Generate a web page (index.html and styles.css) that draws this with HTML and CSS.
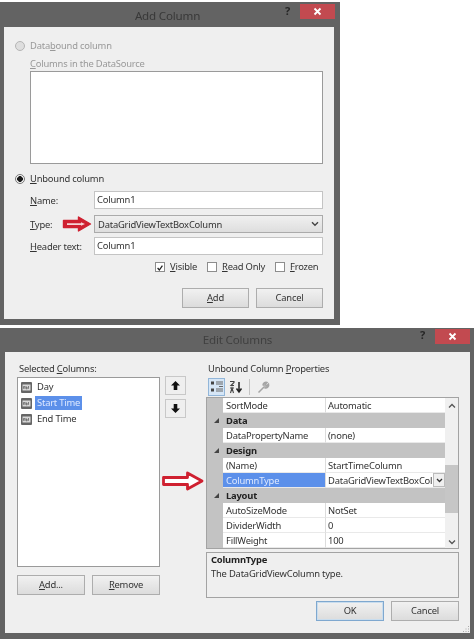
FILE: index.html
```html
<!DOCTYPE html>
<html lang="en">
<head>
<meta charset="utf-8">
<title>Add Column / Edit Columns</title>
<link rel="stylesheet" href="styles.css">
</head>
<body>
<svg class="defs" width="0" height="0" aria-hidden="true">
  <symbol id="abl" viewBox="0 0 11 11">
    <rect x="0" y="0" width="11" height="11" rx="1" fill="#666"/>
    <rect x="1.5" y="2.5" width="8" height="6" fill="#d8d8d8"/>
    <path d="M2.5 6.8V4.5h1.3v2.3M5 4.2v2.6h1.2V5.3H5M7.5 4v2.8" fill="none" stroke="#555" stroke-width=".7"/>
  </symbol>
</svg>

<section class="dialog add">
  <header class="titlebar">
    <span></span>
    <h1 class="title">Add Column</h1>
    <div class="wincontrols"><span class="help">?</span><span class="close"><svg width="9" height="9" viewBox="0 0 9 9"><path d="M1.5 1.500l6 6M7.500 1.500l-6 6" stroke="#fff" stroke-width="1.800"/></svg></span></div>
  </header>
  <div class="panel add-panel">
    <div class="radio-row disabled"><span class="radio"></span><span>Data<u>b</u>ound column</span></div>
    <div class="indent sub disabled"><u>C</u>olumns in the DataSource</div>
    <div class="listbox sources"></div>
    <div class="radio-row unbound"><span class="radio on"></span><span><u>U</u>nbound column</span></div>
    <div class="form">
      <label><u>N</u>ame:</label><div class="field">Column1</div>
      <label class="typelabel"><u>T</u>ype:<svg class="arrow-solid" width="30" height="16" viewBox="0 0 30 16"><path d="M1.500 4.500h15V1l12 7-12 7v-3.500H1.500z" fill="#cf2030" stroke="#cf2030" stroke-width="1.400" stroke-linejoin="round"/><path d="M5 7.300h14v-1l4 1.800-4 1.600v-.8H5z" fill="#f5d3d5"/></svg></label>
      <div class="field select"><span>DataGridViewTextBoxColumn</span><svg width="8" height="6" viewBox="0 0 8 6"><path d="M1 1.200l3 3 3-3" fill="none" stroke="#444" stroke-width="1.400"/></svg></div>
      <label><u>H</u>eader text:</label><div class="field">Column1</div>
    </div>
    <div class="checks">
      <span class="check c1"><span class="box"><svg width="10" height="10" viewBox="0 0 10 10"><path d="M2 5l2.200 2.500L8 2" fill="none" stroke="#222" stroke-width="1.600"/></svg></span><span><u>V</u>isible</span></span>
      <span class="check c2"><span class="box"></span><span><u>R</u>ead Only</span></span>
      <span class="check"><span class="box"></span><span><u>F</u>rozen</span></span>
    </div>
    <div class="actions add-actions">
      <button class="btn wide"><u>A</u>dd</button>
      <button class="btn wide">Cancel</button>
    </div>
  </div>
</section>

<section class="dialog edit">
  <header class="titlebar">
    <span></span>
    <h1 class="title">Edit Columns</h1>
    <div class="wincontrols"><span class="help">?</span><span class="close"><svg width="9" height="9" viewBox="0 0 9 9"><path d="M1.500 1.500l6 6M7.500 1.500l-6 6" stroke="#fff" stroke-width="1.800"/></svg></span></div>
  </header>
  <div class="panel edit-panel">
    <div class="col-left">
      <div class="collabel">Selected <u>C</u>olumns:</div>
      <ul class="listbox columns">
        <li><svg class="ico"><use href="#abl"/></svg><span>Day</span></li>
        <li><svg class="ico"><use href="#abl"/></svg><span class="sel">Start Time</span></li>
        <li><svg class="ico"><use href="#abl"/></svg><span>End Time</span></li>
      </ul>
      <div class="actions left-actions">
        <button class="btn wide"><u>A</u>dd...</button>
        <button class="btn wide"><u>R</u>emove</button>
      </div>
    </div>
    <div class="col-mid">
      <button class="btn move"><svg width="9" height="9" viewBox="0 0 9 9"><path d="M4.500 0L9 4.600H6.300V9H2.700V4.600H0z" fill="#111"/></svg></button>
      <button class="btn move"><svg width="9" height="9" viewBox="0 0 9 9"><path d="M4.500 9L9 4.400H6.300V0H2.700v4.400H0z" fill="#111"/></svg></button>
    </div>
    <div class="col-right">
      <div class="collabel">Unbound Column <u>P</u>roperties</div>
      <div class="toolbar">
        <span class="tool active"><svg width="14" height="14" viewBox="0 0 14 14"><path d="M1 1.500h3v3H1zM1 8.500h3v3H1z" fill="#444"/><path d="M6 2h7M6 4h7M6 9h7M6 11h7M9 6.500h4" stroke="#666" stroke-width="1.200"/></svg></span>
        <span class="tool"><svg width="14" height="14" viewBox="0 0 14 14"><path d="M1 1.500h4v1l-3 3h3M1 8h4M1.500 13l1.500-5 1.500 5" fill="none" stroke="#444" stroke-width="1.100"/><path d="M10 2v9M7.500 8.500L10 12l2.500-3.500" fill="none" stroke="#222" stroke-width="1.500"/></svg></span>
        <span class="tsep"></span>
        <span class="tool"><svg width="13" height="13" viewBox="0 0 13 13"><path d="M1.500 11.500L7 6M6 4.500a3 3 0 0 1 4-3L8.300 3.300l1.400 1.400 1.800-1.700a3 3 0 0 1-4 3.700" fill="#b5b5b5" stroke="#a5a5a5" stroke-width="1.500"/></svg></span>
      </div>
      <div class="propgrid">
        <div class="rows">
          <div class="row"><span class="gut"></span><span class="name">SortMode</span><span class="val">Automatic</span></div>
          <div class="row cat"><span class="gut"><i class="tri"></i></span><span class="name">Data</span></div>
          <div class="row"><span class="gut"></span><span class="name">DataPropertyName</span><span class="val">(none)</span></div>
          <div class="row cat"><span class="gut"><i class="tri"></i></span><span class="name">Design</span></div>
          <div class="row"><span class="gut"></span><span class="name">(Name)</span><span class="val">StartTimeColumn</span></div>
          <div class="row picked"><span class="gut"></span><span class="name">ColumnType</span><span class="val"><span>DataGridViewTextBoxCol</span><span class="drop"><svg width="7" height="5" viewBox="0 0 7 5"><path d="M1 1l2.500 2.500L6 1" fill="none" stroke="#333" stroke-width="1.300"/></svg></span></span></div>
          <div class="row cat"><span class="gut"><i class="tri"></i></span><span class="name">Layout</span></div>
          <div class="row"><span class="gut"></span><span class="name">AutoSizeMode</span><span class="val">NotSet</span></div>
          <div class="row"><span class="gut"></span><span class="name">DividerWidth</span><span class="val">0</span></div>
          <div class="row"><span class="gut"></span><span class="name">FillWeight</span><span class="val">100</span></div>
        </div>
        <div class="scrollbar">
          <svg width="8" height="6" viewBox="0 0 8 6"><path d="M1 4.500l3-3 3 3" fill="none" stroke="#555" stroke-width="1.300"/></svg>
          <div class="thumb"></div>
          <svg width="8" height="6" viewBox="0 0 8 6"><path d="M1 1.500l3 3 3-3" fill="none" stroke="#555" stroke-width="1.300"/></svg>
        </div>
      </div>
      <div class="desc"><strong>ColumnType</strong><span>The DataGridViewColumn type.</span></div>
      <div class="actions right-actions">
        <button class="btn wide default">OK</button>
        <button class="btn wide">Cancel</button>
      </div>
    </div>
    <svg class="arrow-outline" width="42" height="20" viewBox="0 0 42 20"><path d="M1.500 6.500h24V2L40 10 25.500 18v-4.500h-24z" fill="#fff" stroke="#cf2030" stroke-width="2.800" stroke-linejoin="round"/></svg>
    <svg class="grip" width="8" height="8" viewBox="0 0 8 8"><path d="M6 1h1v1H6zM3.500 3.500h1v1h-1zM6 3.500h1v1H6zM1 6h1v1H1zM3.500 6h1v1h-1zM6 6h1v1H6z" fill="#aaa"/></svg>
  </div>
</section>
</body>
</html>
```
FILE: styles.css
```css
* { box-sizing: border-box; }
html, body { margin: 0; padding: 0; background: #fff; }
body {
  width: 474px;
  height: 642px;
  overflow: hidden;
  font: 9.4px/14px "Noto Sans", "Open Sans", sans-serif;
  letter-spacing: -0.2px;
  color: #333;
  filter: blur(0.45px);
}
.defs { position: absolute; }
u { text-decoration-thickness: 1px; text-underline-offset: 1px; }

.dialog { background: #636363; }
.add { width: 340px; height: 323px; margin-top: 2px; padding: 0 6px 6px 4px; }
.edit { width: 474px; height: 311px; margin-top: 3px; padding: 0 4px 6px 5px; }
.titlebar { display: grid; grid-template-columns: 1fr auto 1fr; align-items: start; }
.add .titlebar { height: 25px; padding-top: 2px; margin: 0 -1px 0 -4px; }
.edit .titlebar { height: 24px; margin: 0 0 0 -5px; }
.title { margin: 2px 0 0; font-size: 11.6px; line-height: 20px; font-weight: 400; color: #383838; }
.edit .title { color: #404040; margin: 2px 0 0 5px; }
.wincontrols { justify-self: end; display: flex; align-items: flex-start; gap: 10px; }
.help { font-size: 11px; line-height: 14px; font-weight: 700; color: #262626; }
.close { width: 35px; height: 15px; background: #c24a50; display: flex; align-items: center; justify-content: center; }
.edit .close { margin-top: 1px; }
.panel { background: #efefef; }
.add-panel { height: 292px; padding-top: 12px; }
.disabled { color: #999; }
.radio-row { display: flex; align-items: center; gap: 5px; height: 14px; padding-left: 11px; }
.radio { width: 10px; height: 10px; border-radius: 50%; border: 1px solid #8a8a8a; background: #e6e6e6; }
.disabled .radio { border-color: #b5b5b5; background: #dedede; }
.radio.on { background: radial-gradient(circle, #1c1c1c 0 2.600px, #f5f5f5 3.100px); border-color: #777; }
.indent { margin-left: 26px; }
.sub { margin-top: 4px; height: 14px; }
.listbox { background: #fff; border: 1px solid #9a9a9a; padding: 0; list-style: none; }
.sources { width: 293px; height: 93px; margin: 0 0 0 26px; }
.unbound { margin-top: 8px; }
.form { display: grid; grid-template-columns: 64px 229px; grid-template-rows: 24px 22px 18px; margin: 5px 0 0 26px; align-items: start; }
.form label { line-height: 20px; position: relative; }
.field { height: 18px; background: #fff; border: 1px solid #c4c4c4; padding: 0 2px; line-height: 15px; }
.select { background: linear-gradient(#f0f0f0, #dedede); border-color: #ababab; display: flex; align-items: center; justify-content: space-between; padding: 0 3px; }
.arrow-solid { position: absolute; left: 32px; top: 1px; }
.checks { display: flex; margin: 5px 0 0 151px; height: 14px; }
.check { display: flex; align-items: center; gap: 5px; }
.c1 { width: 52px; }
.c2 { width: 68px; }
.box { width: 10px; height: 10px; border: 1px solid #8d8d8d; background: #fff; display: flex; }
.actions { display: flex; }
.add-actions { margin: 14px 0 0 178px; gap: 7px; }
.btn { height: 20px; padding: 0; font: inherit; letter-spacing: inherit; color: #333; background: linear-gradient(#f1f1f1, #dcdcdc); border: 1px solid #adadad; display: flex; align-items: center; justify-content: center; }
.wide { width: 67px; }

.edit-panel { height: 281px; padding: 10px 0 0 12px; display: flex; position: relative; }
.col-left { width: 143px; }
.collabel { height: 14px; padding-left: 2px; }
.columns { height: 190px; margin: 1px 0 0; padding-top: 1px; }
.columns li { display: flex; align-items: center; gap: 3px; height: 16.200px; padding-left: 3px; }
.ico { width: 11px; height: 11px; flex: none; }
.columns li span { padding: 0 2px; line-height: 14px; }
.columns .sel { background: #5c90ea; color: #dde8ff; }
.left-actions { margin-top: 8px; gap: 7px; }
.left-actions .btn { width: 68px; }
.col-mid { width: 21px; margin: 14px 20px 0 5px; display: flex; flex-direction: column; gap: 4px; }
.move { width: 21px; height: 19px; background: #efefef; border-color: #c8c8c8; }
.col-right { width: 253px; }
.toolbar { display: flex; align-items: center; height: 18px; margin: 2px 0 1px 2px; gap: 2px; }
.tool { width: 17px; height: 18px; display: flex; align-items: center; justify-content: center; }
.tool.active { background: #d6e6f6; border: 1px solid #92b6d9; }
.tsep { width: 1px; height: 16px; background: #c4c4c4; margin: 0 3px; }
.propgrid { height: 152px; border: 1px solid #a3a3a3; background: #f0f0f0; display: flex; }
.rows { width: 238px; background: #c3c3c3; overflow: hidden; }
.row { display: grid; grid-template-columns: 16px 102px 120px; height: 15px; line-height: 16px; }
.gut { background: #c3c3c3; position: relative; }
.name, .val { background: #fff; padding-left: 3px; border-bottom: 1px solid #e9e9e9; white-space: nowrap; overflow: hidden; }
.val { border-left: 1px solid #dcdcdc; padding-left: 2px; }
.cat .name { grid-column: 2 / 4; background: #c3c3c3; border: 0; font-weight: 700; color: #222; }
.tri { position: absolute; left: 7px; top: 5px; width: 0; height: 0; border-left: 5px solid transparent; border-bottom: 5px solid #444; }
.picked .name { background: #5c90ea; color: #dde8ff; }
.picked .val { display: flex; justify-content: space-between; }
.drop { width: 12px; height: 14px; background: #efefef; border: 1px solid #bbb; display: flex; align-items: center; justify-content: center; flex: none; }
.scrollbar { flex: 1; display: flex; flex-direction: column; align-items: center; padding-top: 5px; }
.thumb { width: 100%; height: 48px; background: #c6c6c6; margin: 56px 0 26px; }
.desc { height: 46px; margin-top: 3px; border: 1px solid #a3a3a3; padding: 0 4px; display: flex; flex-direction: column; }
.desc strong { color: #222; font-weight: 700; }
.right-actions { margin-top: 3px; justify-content: flex-end; gap: 7px; }
.right-actions .btn { width: 68px; height: 20px; }
.default { border: 1px solid #7fa8cf; box-shadow: inset 0 0 0 1px #c9ddee; }
.arrow-outline { position: absolute; left: 157px; top: 119px; }
.grip { position: absolute; right: 0; bottom: 0; }
```
